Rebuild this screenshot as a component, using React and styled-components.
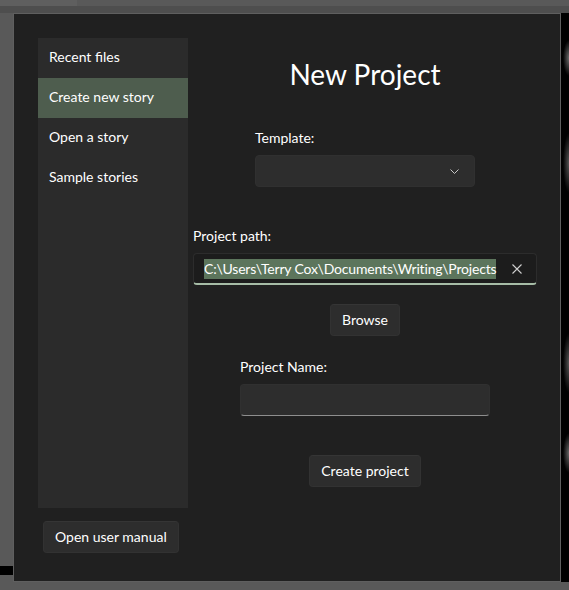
import React from 'react';
import styled, { createGlobalStyle } from 'styled-components';

const GlobalStyle = createGlobalStyle`
  html, body {
    margin: 0;
    padding: 0;
    background: #595959;
  }
  body {
    font-family: Lato, 'Noto Sans', sans-serif;
    color: #ffffff;
  }
  * {
    box-sizing: border-box;
  }
`;

const menuItems = ['Recent files', 'Create new story', 'Open a story', 'Sample stories'];

const ChevronDown = () => (
  <svg width="9" height="5" viewBox="0 0 9 5" fill="none">
    <path d="M0.5 0.5 L4.5 4.5 L8.5 0.5" stroke="#c8c8c8" strokeWidth="1" />
  </svg>
);

const ClearIcon = () => (
  <svg width="10" height="10" viewBox="0 0 10 10" fill="none">
    <path d="M0.5 0.5 L9.5 9.5 M9.5 0.5 L0.5 9.5" stroke="#cfcfcf" strokeWidth="1.1" />
  </svg>
);

export default function App() {
  return (
    <>
      <GlobalStyle />
      <Desktop>
        <Dialog>
          <Body>
            <Sidebar>
              {menuItems.map((item) => (
                <MenuItem key={item} selected={item === 'Create new story'}>
                  {item}
                </MenuItem>
              ))}
            </Sidebar>
            <Main>
              <Title>New Project</Title>
              <Field width={220} top={36}>
                <Label>Template:</Label>
                <ComboBox>
                  <ChevronDown />
                </ComboBox>
              </Field>
              <Field width={344} top={39}>
                <Label>Project path:</Label>
                <PathBox>
                  <Selected>C:\Users\Terry Cox\Documents\Writing\Projects</Selected>
                  <ClearButton>
                    <ClearIcon />
                  </ClearButton>
                </PathBox>
              </Field>
              <Button top={19}>Browse</Button>
              <Field width={250} top={21}>
                <Label>Project Name:</Label>
                <NameBox />
              </Field>
              <Button top={39}>Create project</Button>
            </Main>
          </Body>
          <Footer>
            <Button>Open user manual</Button>
          </Footer>
        </Dialog>
        <EdgeStrip />
      </Desktop>
    </>
  );
}

const Desktop = styled.div`
  width: 569px;
  height: 590px;
  display: flex;
  align-items: flex-start;
  padding: 13px 0 0 13px;
  overflow: hidden;
  background:
    linear-gradient(#5f5f5f, #5f5f5f) 0 0 / 77px 6px no-repeat,
    linear-gradient(#4e4e4e, #4e4e4e) 0 6px / 100% 7px no-repeat,
    linear-gradient(#000, #000) 0 566px / 13px 9px no-repeat,
    #595959;
`;

const Dialog = styled.div`
  width: 548px;
  height: 569px;
  background: #202020;
  border: 1px solid #5f5f5f;
  padding: 24px 0 0 24px;
  display: flex;
  flex-direction: column;
`;

const EdgeStrip = styled.div`
  width: 8px;
  height: 569px;
  background:
    radial-gradient(ellipse 6px 18px at 100% 45px, #6a6a6a, transparent),
    radial-gradient(ellipse 6px 30px at 100% 150px, #555, transparent),
    radial-gradient(ellipse 6px 30px at 100% 350px, #555, transparent),
    radial-gradient(ellipse 6px 20px at 100% 440px, #666, transparent),
    #000;
`;

const Body = styled.div`
  display: flex;
  height: 470px;
`;

const Sidebar = styled.nav`
  width: 150px;
  flex: none;
  background: #2b2b2b;
  display: flex;
  flex-direction: column;
`;

const MenuItem = styled.div`
  height: 40px;
  padding: 0 11px 3px;
  display: flex;
  align-items: center;
  font-size: 14px;
  background: ${({ selected }) => (selected ? '#4e5d4e' : 'transparent')};
`;

const Main = styled.main`
  width: 354px;
  display: flex;
  flex-direction: column;
  align-items: center;
`;

const Title = styled.h1`
  margin: 18px 0 0;
  font-size: 28px;
  font-weight: 400;
  line-height: 36px;
`;

const Field = styled.div`
  width: ${({ width }) => width}px;
  margin-top: ${({ top }) => top}px;
  display: flex;
  flex-direction: column;
  gap: 7px;
`;

const Label = styled.label`
  font-size: 14px;
  line-height: 20px;
`;

const ComboBox = styled.div`
  height: 32px;
  background: #2d2d2d;
  border-radius: 4px;
  border: 1px solid #303030;
  display: flex;
  align-items: center;
  justify-content: flex-end;
  padding-right: 15px;
`;

const PathBox = styled.div`
  height: 32px;
  background: #1c1c1c;
  border: 1px solid #2c2c2c;
  border-bottom: 2px solid #a6bca6;
  border-radius: 4px;
  display: flex;
  align-items: center;
  padding-left: 10px;
`;

const Selected = styled.span`
  background: #5c755c;
  font-size: 14px;
  line-height: 20px;
  letter-spacing: -0.18px;
  white-space: nowrap;
`;

const ClearButton = styled.span`
  margin-left: auto;
  width: 38px;
  display: flex;
  justify-content: center;
`;

const NameBox = styled.div`
  height: 32px;
  background: #2d2d2d;
  border: 1px solid #303030;
  border-bottom: 1px solid #8e8e8e;
  border-radius: 4px;
`;

const Button = styled.button`
  margin-top: ${({ top }) => top || 0}px;
  height: 32px;
  padding: 0 11px 2px;
  background: #2d2d2d;
  border: 1px solid #323232;
  border-top-color: #353535;
  border-radius: 4px;
  color: #ffffff;
  font-family: inherit;
  font-size: 14px;
`;

const Footer = styled.div`
  margin-top: 13px;
  padding-left: 5px;
`;
